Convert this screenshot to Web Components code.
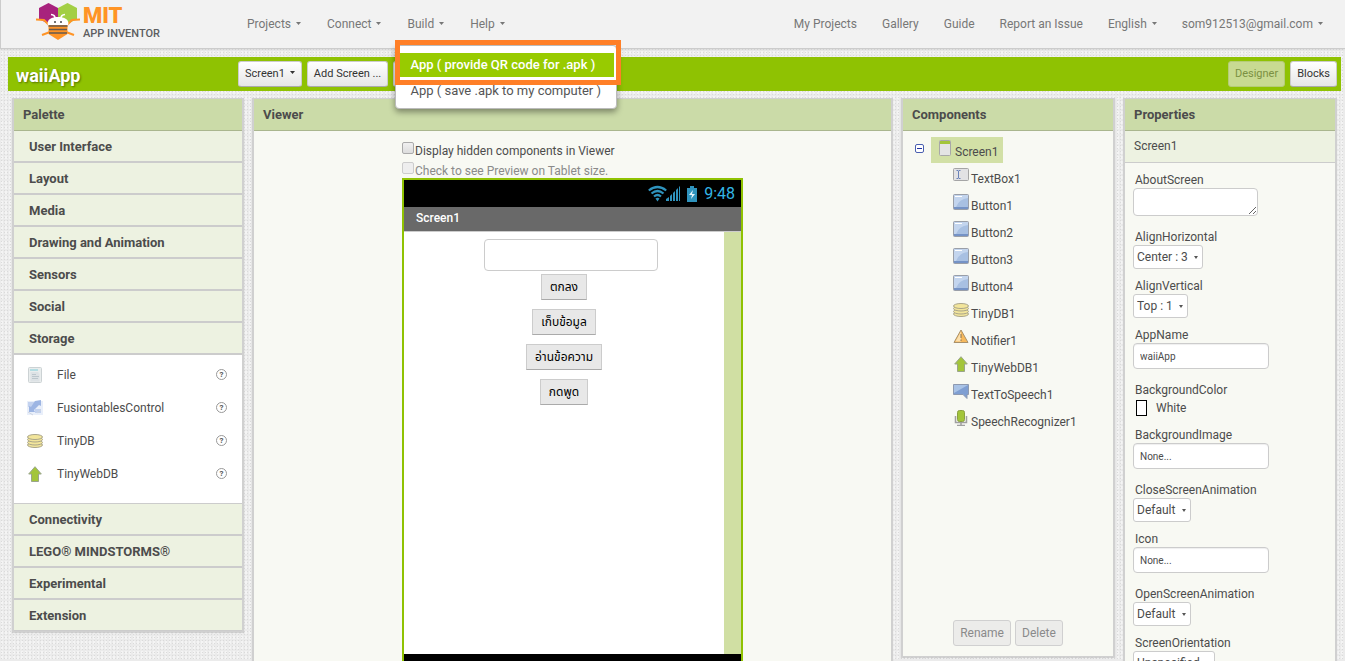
<!DOCTYPE html>
<html lang="en">
<head>
<meta charset="utf-8">
<title>MIT App Inventor</title>
<style>
html, body { margin: 0; height: 100%; }
body { font: 12px/16px Roboto, "Noto Sans", sans-serif; color: #4c4c4c; }
</style>
</head>
<body>
<inventor-app></inventor-app>
<script>
const define = (name, html, setup) => customElements.define(name, class extends HTMLElement {
  connectedCallback() {
    if (this.shadowRoot) return;
    const root = this.attachShadow({ mode: 'open' });
    const t = document.createElement('template');
    t.innerHTML = typeof html === 'function' ? html(this) : html;
    root.append(t.content.cloneNode(true));
    if (setup) setup(this, root);
  }
});

const ICONS = {
  file: '<rect x="1.5" y=".5" width="13" height="15" rx="1" fill="#e9eded" stroke="#ccd2d4"/><path d="M3 2h8v2H3z" fill="#b4dde3"/><path d="M3.500 5h8v1.500h1v8h-9z" fill="#dde2e5"/><path d="M5 7.500h4M5 9.500h7M5 11.500h6" stroke="#bcc6cc"/>',
  fusion: '<rect x="0" y="1" width="16" height="14" fill="#e9effa"/><path d="M1 2h6v5H1zM8 9h6v4H8z" fill="#c3d2ef"/><path d="M8 1l6-1v6l-2-1-5 5 1 2H2V6l2 1z" fill="#9db5e3"/><path d="M1 12l5 3M10 13l4-3" stroke="#cfd6e2"/>',
  db: '<g fill="#f2e59b" stroke="#aaa58a"><ellipse cx="8" cy="12" rx="7.500" ry="2.500"/><ellipse cx="8" cy="9.500" rx="7.500" ry="2.500"/><ellipse cx="8" cy="6.500" rx="7.500" ry="2.500"/><ellipse cx="8" cy="4" rx="7.500" ry="2.500"/></g>',
  web: '<path d="M8 .7L14.300 8H11.500v7.500h-7V8H1.700z" fill="#a3c53a" stroke="#9aa58a"/>',
  screen: '<rect x="2.500" y=".5" width="11" height="15" rx="1" fill="#e4e4e4" stroke="#a8a8a8"/><path d="M3 1h10v3H3z" fill="#a3c53a"/>',
  textbox: '<rect x=".5" y="1.500" width="15" height="12" rx="1" fill="#e2e2e4" stroke="#a5a5a5"/><path d="M3.500 3.500h1.500l.5.5.5-.5h1.500M3.500 11.500h1.500l.5-.5.5.5h1.500M5.500 4v7" stroke="#6a83b8" fill="none"/>',
  button: '<rect x=".5" y=".5" width="15" height="15" rx="1" fill="#a8c0e2" stroke="#9a9fa8"/><path d="M1 1h14v3Q6 5 3 13H1z" fill="#c3d5ee"/><path d="M2 2h7v1H2z" fill="#fff"/><path d="M1 13h14v2H1z" fill="#7593c6"/>',
  warn: '<path d="M8 1l7 12.500H1z" fill="#f7b95c" stroke="#a8916b"/><path d="M8 2.500v10H2.500z" fill="#fbe0ad"/><path d="M8 5v4M8 10.500v1.500" stroke="#8a7552"/>',
  speech: '<path d="M.5 1.500h15v10H14v4l-4-4H.5z" fill="#7f9fd2" stroke="#8e9ab0"/><path d="M1 2h14L1 10z" fill="#a9c3e6"/>',
  mic: '<path d="M2.500 6v6.500h11V6M8 13v2M4 15.500h8" fill="none" stroke="#a0a0a0" stroke-width="1.500"/><rect x="4.500" y=".5" width="7" height="11" rx="2" fill="#a3c53a" stroke="#8ba040"/>'
};

define('app-icon', el => `<style>:host{display:block;width:16px;height:16px;flex:none}svg{display:block}</style>
<svg width="16" height="16" viewBox="0 0 16 16" aria-hidden="true">${ICONS[el.getAttribute('name')]}</svg>`);

define('drop-caret', `<style>:host{display:inline-block;width:5px;height:3px;margin-left:5px;vertical-align:3px}svg{display:block}</style>
<svg width="5" height="3" viewBox="0 0 5 3" aria-hidden="true"><path d="M0 0h5L2.500 3z" fill="currentColor"/></svg>`);

define('app-logo', `<style>
:host{display:flex;align-items:flex-start;width:122px;gap:3px}
svg{display:block;flex:none}
.words{display:flex;flex-direction:column;white-space:nowrap;padding-top:2px}
b{font-size:22px;line-height:24px;font-weight:900;color:#ff9426}
span{font-size:11px;line-height:12px;font-weight:500;color:#5c5d60}
</style>
<svg width="44" height="38" viewBox="0 0 44 38" aria-hidden="true">
<path d="M12.500 1l9.500 5v11l-9.500 5L3 17V6z" fill="#a8237d"/><path d="M31.500 1L41 6v11l-9.500 5-9.500-5V6z" fill="#a3cf44"/>
<path d="M0 17.500l8 .5 5 5M44 17.500l-8 .5-5 5M6 33l8-3M38 33l-8-3" fill="none" stroke="#ff9426" stroke-width="2"/>
<path d="M12 24c-2-7 4-9 10-9s12 2 10 9z" fill="#fff"/><path d="M19 16q0-3-4-3.500M25 16q0-3 4-3.500" stroke="#fff" fill="none" stroke-width="1.500"/>
<circle cx="19" cy="20" r="1" fill="#444"/><circle cx="25" cy="20" r="1" fill="#444"/>
<path d="M12.500 23h19v9L22 38l-9.500-6z" fill="#ff9426"/><path d="M12.500 24h19M13 27.500h18M13 31h18" stroke="#66594f" stroke-width="1.500"/>
</svg><div class="words"><b>MIT</b><span>APP INVENTOR</span></div>`);

define('build-menu', `<style>
:host{position:absolute;z-index:2;left:-12px;top:29px;width:220px;box-sizing:content-box;background:#fff;border:1px solid #bbb;border-radius:4px;box-shadow:0 3px 6px #0006;font-size:13px}
ul{list-style:none;margin:0;padding:7px 2px 5px 4px}
a{display:block;padding:0 10px;color:#555;text-decoration:none;line-height:24px;white-space:nowrap}
.on{background:#98cb00;color:#fff;font-weight:500}
i{position:absolute;left:-1px;top:-6px;width:216px;height:35px;border:5px solid #ff7f27;pointer-events:none}
li+li{padding-top:2px}
</style><ul><li><a class="on" href="#qr">App ( provide QR code for .apk )</a></li><li><a href="#save">App ( save .apk to my computer )</a></li></ul><i></i>`);

define('app-header', `<style>
:host{display:flex;height:48px;box-sizing:content-box;background:#f2f2f2;border-bottom:1px solid #ccc;border-left:1px solid #ccc;color:#777;padding:0 22px 0 35px;box-shadow:0 1px 2px #0001}
app-logo{padding-top:2px;flex:none}
nav{display:flex;flex:1;align-items:center;gap:26px;margin-left:89px}
nav>div{position:relative;white-space:nowrap}
a{color:inherit;text-decoration:none}
.right{margin-left:auto;display:flex;gap:25px}
</style>
<app-logo></app-logo>
<nav><div><a href="#projects">Projects<drop-caret></drop-caret></a></div><div><a href="#connect">Connect<drop-caret></drop-caret></a></div><div><a href="#build">Build<drop-caret></drop-caret></a><build-menu></build-menu></div><div><a href="#help">Help<drop-caret></drop-caret></a></div>
<div class="right"><a href="#my">My Projects</a><a href="#gallery">Gallery</a><a href="#guide">Guide</a><a href="#issue">Report an Issue</a><a href="#lang">English<drop-caret></drop-caret></a><a href="#user">som912513@gmail.com<drop-caret></drop-caret></a></div></nav>`);

define('project-bar', `<style>
:host{display:flex;align-items:center;height:34px;background:#8fc202;margin:8px 4px 7px 8px;padding:0 4px 0 8px}
h1{margin:0;padding-top:3px;font-size:18px;line-height:24px;font-weight:700;color:#fff;text-shadow:1px 1px 2px #0006;width:222px}
button{font:11px/16px Roboto,sans-serif;height:26px;padding:0 6px;border:1px solid #ccc;border-bottom-color:#aaa;border-radius:3px;background:linear-gradient(#fff,#e6e6e6);color:#333;white-space:nowrap;margin:0 5px 0 0}
.rest{width:90px}
.views{margin-left:auto;display:flex;gap:5px}
.views button{margin:0}
.views button:disabled{background:#c8da92;border-color:#b5cc77;color:#7b9142}
</style><h1>waiiApp</h1><button>Screen1<drop-caret></drop-caret></button><button>Add Screen ...</button><button class="rest" aria-label="Remove Screen"></button>
<div class="views"><button disabled>Designer</button><button>Blocks</button></div>`);

define('side-panel', el => `<style>
:host{display:block;background:#f8f9f3;border:1px solid #d0d0d0;border-width:1px 2px;min-width:0;box-shadow:0 1px 1px #0002}
h2{margin:0;padding:0 9px;font-size:13px;line-height:31px;font-weight:700;background:#cbdba8;border-bottom:1px solid #aab68e}
</style><h2>${el.getAttribute('heading')}</h2><slot></slot>`);

define('palette-item', el => `<style>
:host{display:flex;align-items:center;height:33px;padding:0 15px 0 13px}
a{flex:1;color:inherit;text-decoration:none;margin-left:14px}
button{width:11px;height:11px;padding:0;border:1px solid #999;border-radius:6px;background:#fff;color:#555;font:700 8px/9px Roboto,sans-serif}
</style><app-icon name="${el.getAttribute('icon')}"></app-icon><a href="#add"><slot></slot></a><button aria-label="Help">?</button>`);

define('palette-list', `<style>
:host{display:block;background:#edf2e1}
h3{margin:0;font-size:13px;font-weight:700;line-height:28px;border-bottom:2px solid #ccc;padding:2px 15px 0}
h3:last-child{border-bottom-width:1px}
.open{background:#fff;padding:3px 0 13px;border-bottom:1px solid #ccc}
</style>
<h3>User Interface</h3><h3>Layout</h3><h3>Media</h3><h3>Drawing and Animation</h3><h3>Sensors</h3><h3>Social</h3><h3>Storage</h3>
<div class="open"><palette-item icon="file">File</palette-item><palette-item icon="fusion">FusiontablesControl</palette-item><palette-item icon="db">TinyDB</palette-item><palette-item icon="web">TinyWebDB</palette-item></div>
<h3>Connectivity</h3><h3>LEGO® MINDSTORMS®</h3><h3>Experimental</h3><h3>Extension</h3>`);

define('phone-preview', `<style>
:host{display:block;width:337px;border:2px solid #8fc202;background:#000}
.status{display:flex;align-items:center;justify-content:flex-end;height:27px;color:#33b5e5;font-size:16px;padding-right:6px}
.status svg{margin-right:6px}
.title{background:#696969;color:#fff;font-weight:500;line-height:22px;padding:0 12px 2px;border-bottom:1px solid #ccc}
.canvas{background:#fff;border-right:17px solid #d0dfa3;min-height:415px;padding-top:7px;display:flex;flex-direction:column;align-items:center}
input{box-sizing:border-box;width:174px;height:32px;border:1px solid #ccc;border-radius:4px;margin:0 0 3px 14px}
button{font:12px/16px Roboto,"Noto Sans Thai","Noto Sans",sans-serif;color:#000;height:26px;padding:0 8px;border:1px solid #ccc;border-bottom-color:#aaa;background:#e8e8e8;margin:0 0 9px}
.foot{height:40px}
</style>
<div class="status"><svg width="50" height="18" viewBox="0 0 50 18" aria-hidden="true"><g fill="none" stroke="#2f93bd" stroke-width="2.200"><path d="M.8 5.500q8.700-7 17.400 0M3.500 8.500q6-5 12 0M6 11.500q3.500-3 7 0"/></g><path d="M7.500 13.500q2-1.500 4 0l-2 3z" fill="#2f93bd"/><path d="M18 14l3-2v4h-3zM22 11l2-2v7h-2zM25 8l2-2v10h-2zM28 5l2-2v13h-2zM31 2l1-1v15h-1z" fill="#2f93bd"/><path d="M39 3h3V1h4v2h3v14H39z" fill="#2f93bd"/><path d="M45 5l-4 5h3l-1 4 4-5h-3z" fill="#e8f7ff"/></svg><span>9:48</span></div>
<div class="title">Screen1</div>
<div class="canvas"><input aria-label="TextBox1"><button>ตกลง</button><button>เก็บข้อมูล</button><button>อ่านข้อความ</button><button>กดพูด</button></div><div class="foot"></div>`);

define('viewer-area', `<style>
:host{display:flex;flex-direction:column;align-items:center;padding-top:10px}
.box{width:341px}
label{display:flex;height:20px;line-height:20px;align-items:center}
input{appearance:none;width:12px;height:12px;margin:0 1px 6px 0;border:1px solid #aaa;border-radius:2px;background:linear-gradient(#f0f0f0,#ddd);box-sizing:border-box}
.off{color:#8a8a8a}.off input{border-color:#ccc;background:#eee}
phone-preview{margin-top:-3px}
</style><div class="box"><label><input type="checkbox">Display hidden components in Viewer</label><label class="off"><input type="checkbox" disabled>Check to see Preview on Tablet size.</label><phone-preview></phone-preview></div>`);

define('tree-node', el => `<style>
:host{display:flex;align-items:flex-end;height:27px;gap:2px;padding-left:50px}
app-icon{margin-bottom:7px}
span{line-height:16px;margin-bottom:3px}
</style><app-icon name="${el.getAttribute('icon')}"></app-icon><span><slot></slot></span>`);

define('component-tree', `<style>
:host{display:flex;flex-direction:column;padding:6px 0 10px;min-height:509px}
.root{display:flex;align-items:center}
.toggle{appearance:none;width:9px;height:9px;padding:0;margin:0 7px 3px 12px;border:1px solid #4a5fb0;border-radius:2px;background:linear-gradient(#2030a0,#2030a0) center/5px 1px no-repeat #fff}
.sel{display:flex;height:26px;box-sizing:border-box;background:#d2e0a6;padding:3px 5px 0 6px;gap:2px}
.sel span{padding-top:4px}
.actions{margin-top:auto;display:flex;justify-content:center;gap:4px}
.actions button{font:12px/16px Roboto,sans-serif;height:26px;padding:0 6px;border:1px solid #d0d0d0;border-radius:3px;background:#ececea;color:#8a8a8a}
</style>
<div class="root"><button class="toggle" aria-label="Collapse"></button><div class="sel"><app-icon name="screen"></app-icon><span>Screen1</span></div></div>
<tree-node icon="textbox">TextBox1</tree-node><tree-node icon="button">Button1</tree-node><tree-node icon="button">Button2</tree-node><tree-node icon="button">Button3</tree-node><tree-node icon="button">Button4</tree-node><tree-node icon="db">TinyDB1</tree-node><tree-node icon="warn">Notifier1</tree-node><tree-node icon="web">TinyWebDB1</tree-node><tree-node icon="speech">TextToSpeech1</tree-node><tree-node icon="mic">SpeechRecognizer1</tree-node>
<div class="actions"><button disabled>Rename</button><button disabled>Delete</button></div>`);

define('property-field', el => {
  const kind = el.getAttribute('kind'), v = el.getAttribute('value') || '';
  const control = {
    area: '<textarea id="c"></textarea>',
    text: `<input id="c" value="${v}">`,
    select: `<span class="pick"><select id="c"><option>${v}</option></select></span>`,
    color: `<button id="c" class="color"><i></i>${v}</button>`
  }[kind];
  return `<style>
:host{display:block;padding-bottom:${kind === 'area' || kind === 'text' ? 13 : 9}px}
label{display:block;padding-left:2px}
textarea,input,select{display:block;box-sizing:border-box;margin:0;border:1px solid #ccc;border-radius:4px;background:#fff;color:#4c4c4c;font-family:inherit}
textarea{width:125px;height:28px}
input{width:136px;height:26px;padding:0 6px;font-size:10px;box-shadow:inset 0 1px 1px #0001}
select{appearance:none;height:24px;padding:0 14px 0 3px;font-size:12px;border-radius:3px}
.pick{display:inline-block;position:relative;vertical-align:top}
.pick::after{content:"";position:absolute;right:5px;top:11px;border:solid transparent;border-width:3px 2px 0;border-top-color:#555;pointer-events:none}
.color{display:flex;align-items:center;height:20px;border:0;background:none;padding:0 0 0 3px;color:inherit;font:inherit;gap:9px}
i{width:9px;height:14px;border:1px solid #000;background:#fff}
</style><label for="c">${el.getAttribute('label')}</label>${control}`;
});

define('property-list', `<style>
:host{display:block}
h3{margin:0;font-size:12px;font-weight:400;line-height:31px;background:#edf2e1;border-bottom:1px solid #ccc;padding:0 9px}
.fields{padding:9px 8px}
</style><h3>Screen1</h3><div class="fields">
<property-field label="AboutScreen" kind="area"></property-field>
<property-field label="AlignHorizontal" kind="select" value="Center : 3"></property-field>
<property-field label="AlignVertical" kind="select" value="Top : 1"></property-field>
<property-field label="AppName" kind="text" value="waiiApp"></property-field>
<property-field label="BackgroundColor" kind="color" value="White"></property-field>
<property-field label="BackgroundImage" kind="text" value="None..."></property-field>
<property-field label="CloseScreenAnimation" kind="select" value="Default"></property-field>
<property-field label="Icon" kind="text" value="None..."></property-field>
<property-field label="OpenScreenAnimation" kind="select" value="Default"></property-field>
<property-field label="ScreenOrientation" kind="select" value="Unspecified"></property-field></div>`);

define('inventor-app', `<style>
:host{display:block;height:100vh;overflow:hidden;background-color:#ebebeb;background-image:radial-gradient(#dadada 1px,transparent 1px),radial-gradient(#f4f4f4 1px,transparent 1px);background-size:3px 3px,4px 5px}
main{display:grid;grid-template-columns:232px minmax(0,1fr) 214px 214px;gap:8px;align-items:start;padding:0 8px 0 12px}
</style><app-header></app-header><project-bar></project-bar>
<main><side-panel heading="Palette"><palette-list></palette-list></side-panel><side-panel heading="Viewer"><viewer-area></viewer-area></side-panel><side-panel heading="Components"><component-tree></component-tree></side-panel><side-panel heading="Properties"><property-list></property-list></side-panel></main>`);
</script>
</body>
</html>
